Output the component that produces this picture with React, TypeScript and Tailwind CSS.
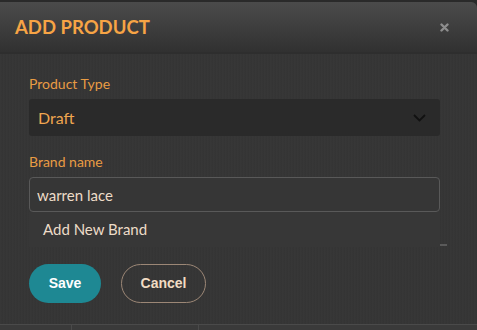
import { useState } from 'react';

export default function App() {
  const [brand, setBrand] = useState('warren lace');

  return (
    <div className="h-[330px] w-[477px] overflow-hidden bg-[#2a2a2a] pt-[2px] font-['Lato',sans-serif]">
      {/* Modal */}
      <div className="h-[322px] rounded-tr-[6px] bg-[#353535] bg-[repeating-linear-gradient(90deg,rgba(255,255,255,0.012)_0px,rgba(255,255,255,0.012)_1px,rgba(0,0,0,0.02)_2px,rgba(0,0,0,0)_3px)] flex flex-col">
        {/* Header */}
        <div className="h-[50px] shrink-0 rounded-tr-[6px] bg-gradient-to-b from-[#4b4b4b] to-[#313131] flex items-center justify-between pl-[15px] pr-[28px]">
          <h2 className="text-[18.5px] font-bold text-[#f7a445] mt-[1px]">ADD PRODUCT</h2>
          <button className="text-[#8d8d8d]">
            <svg width="9" height="9" viewBox="0 0 9 9">
              <path d="M1.5 1.5 L7.5 7.5 M7.5 1.5 L1.5 7.5" stroke="currentColor" strokeWidth="2.4" strokeLinecap="round" />
            </svg>
          </button>
        </div>
        <div className="h-[2px] bg-[#2e2e2e]" />

        {/* Body */}
        <div className="pl-[29px] pr-[37px] pt-[20px] flex flex-col">
          <label className="text-[14px] leading-[20px] text-[#e99c44]">Product Type</label>
          <div className="mt-[5px] h-[37px] rounded-[3px] bg-[#2a2a2a] flex items-center justify-between pl-[9px] pr-[14px]">
            <span className="text-[16px] text-[#f0a650]">Draft</span>
            <svg width="13" height="8" viewBox="0 0 13 8">
              <path d="M1 1 L6.5 6.5 L12 1" stroke="#111" strokeWidth="1.8" fill="none" />
            </svg>
          </div>

          <label className="mt-[16px] text-[14px] leading-[20px] text-[#e99c44]">Brand name</label>
          <div className="relative mt-[5px]">
            <input
              value={brand}
              onChange={e => setBrand(e.target.value)}
              className="h-[35px] w-full rounded-[4px] border border-[#595959] bg-[#363636] pl-[7px] text-[15px] text-[#eddcc8] outline-none"
            />
            <div className="h-[35px] bg-[#373737] flex items-center pl-[14px] text-[15px] text-[#eddcc8]">
              Add New Brand
            </div>
            <div className="absolute right-[-7px] bottom-[1px] h-[2px] w-[7px] bg-[#5a5a5a]" />
          </div>

          <div className="mt-[17px] flex items-center gap-[20px] font-['Liberation_Sans',Arial,sans-serif]">
            <button className="h-[39px] w-[72px] rounded-full bg-[#1e8893] text-[14px] font-bold text-white">Save</button>
            <button className="h-[39px] w-[85px] rounded-full border border-[#9c8776] text-[14px] font-bold text-[#f1dcc3]">Cancel</button>
          </div>
        </div>
      </div>

      {/* Page behind */}
      <div className="h-[6px] border-t border-[#4a4a4a] bg-[#3a3a3a] flex">
        <div className="w-[72px] border-r border-[#4a4a4a]" />
        <div className="w-[127px] border-r border-[#4a4a4a]" />
      </div>
    </div>
  );
}
